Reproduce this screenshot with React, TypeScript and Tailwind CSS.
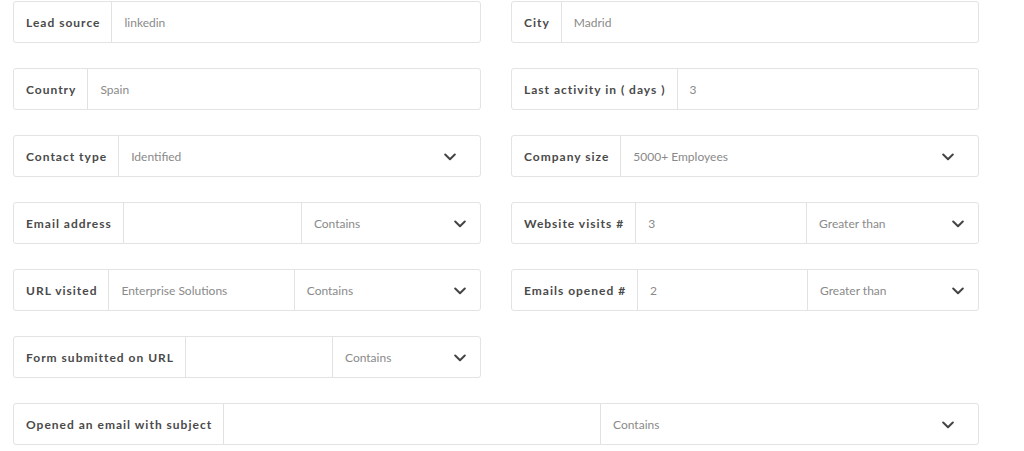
import React from "react";

const font = { fontFamily: "Lato, 'Open Sans', sans-serif" };

function Chevron() {
  return (
    <svg width="12" height="8" viewBox="0 0 12 8" fill="none">
      <polyline points="1.2,1.5 6,6.2 10.8,1.5" stroke="#444" strokeWidth="2" strokeLinecap="round" strokeLinejoin="round" />
    </svg>
  );
}

function Label({ text }: { text: string }) {
  return (
    <div className="flex items-center pl-3 pr-[11px] pt-[1px] border-r border-[#e2e2e2] shrink-0 text-[12px] font-bold tracking-[1px] text-[#4a4a4a] whitespace-nowrap">
      {text}
    </div>
  );
}

function Box({ children, className = "" }: { children: React.ReactNode; className?: string }) {
  return (
    <div className={`flex h-[42px] border border-[#e3e3e3] rounded-[3px] bg-white ${className}`}>{children}</div>
  );
}

function TextField({ label, value }: { label: string; value: string }) {
  return (
    <Box>
      <Label text={label} />
      <div className="flex items-center pl-3 pt-[1px] text-[12px] text-[#8a8a8a]">{value}</div>
    </Box>
  );
}

function SelectField({ label, value }: { label: string; value: string }) {
  return (
    <Box>
      <Label text={label} />
      <div className="flex flex-1 items-center justify-between pl-3 pr-6 pt-[1px] text-[12px] text-[#8a8a8a]">
        <span>{value}</span>
        <Chevron />
      </div>
    </Box>
  );
}

function CompoundField({
  label,
  value,
  op,
  pr = "pr-[14px]",
  className = "",
}: {
  label: string;
  value: string;
  op: string;
  pr?: string;
  className?: string;
}) {
  return (
    <Box className={className}>
      <Label text={label} />
      <div className="grid flex-1 grid-cols-2">
        <div className="flex items-center pl-3 pt-[1px] border-r border-[#e2e2e2] text-[12px] text-[#8a8a8a]">
          {value}
        </div>
        <div className={`flex items-center justify-between pl-3 pt-[1px] ${pr} text-[12px] text-[#8a8a8a]`}>
          <span>{op}</span>
          <Chevron />
        </div>
      </div>
    </Box>
  );
}

export default function App() {
  return (
    <div className="w-[1024px] h-[451px] bg-white overflow-hidden" style={font}>
      <div className="pl-[13px] pt-[1px]">
        <div className="grid grid-cols-2 gap-x-[30px] gap-y-[25px] w-[966px]">
          <TextField label="Lead source" value="linkedin" />
          <TextField label="City" value="Madrid" />
          <TextField label="Country" value="Spain" />
          <TextField label="Last activity in ( days )" value="3" />
          <SelectField label="Contact type" value="Identified" />
          <SelectField label="Company size" value="5000+ Employees" />
          <CompoundField label="Email address" value="" op="Contains" />
          <CompoundField label="Website visits #" value="3" op="Greater than" />
          <CompoundField label="URL visited" value="Enterprise Solutions" op="Contains" />
          <CompoundField label="Emails opened #" value="2" op="Greater than" />
          <CompoundField label="Form submitted on URL" value="" op="Contains" />
          <div />
          <CompoundField
            label="Opened an email with subject"
            value=""
            op="Contains"
            pr="pr-6"
            className="col-span-2"
          />
        </div>
      </div>
    </div>
  );
}
